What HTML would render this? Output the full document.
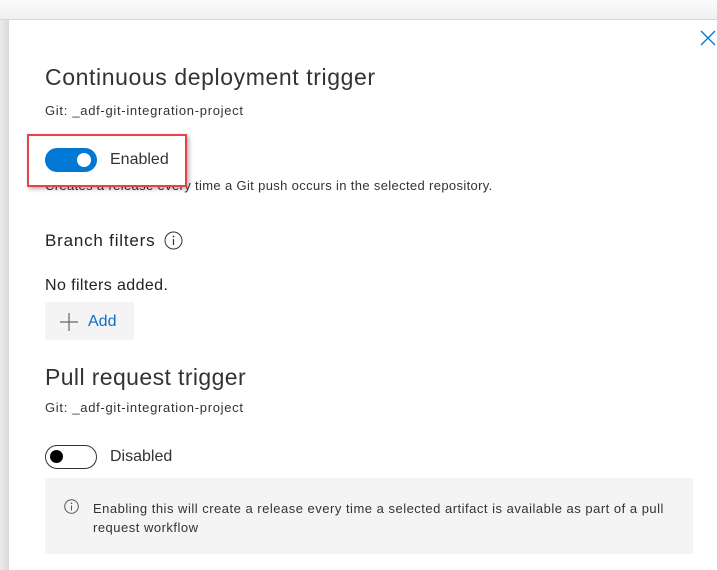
<!DOCTYPE html>
<html><head><style>
body{margin:0;width:717px;height:570px;overflow:hidden;background:#fff;font-family:"Segoe UI","Liberation Sans",sans-serif;color:#333;position:relative}
.a{position:absolute;white-space:nowrap}
</style></head><body>
<div class="a" style="left:0;top:0;width:717px;height:19px;background:linear-gradient(#fbfbfb,#f0f0f0);border-bottom:1px solid #d6d6d6"></div>
<div class="a" style="left:0;top:20px;width:9px;height:550px;background:linear-gradient(90deg,#ececec,#d8d8d8)"></div>
<svg class="a" style="left:700px;top:30px" width="16" height="16"><path d="M1 1L15 15M15 1L1 15" stroke="#0078d4" stroke-width="1.3"/></svg>
<div class="a" style="left:45px;top:64px;font-size:23px;letter-spacing:0.6px;color:#333">Continuous deployment trigger</div>
<div class="a" style="left:45px;top:103px;font-size:13px;letter-spacing:0.7px;color:#333">Git: _adf-git-integration-project</div>
<div class="a" style="left:45px;top:178px;font-size:13px;letter-spacing:0.35px;color:#333">Creates a release every time a Git push occurs in the selected repository.</div>
<div class="a" style="left:27px;top:134px;width:156px;height:49px;border:2px solid #e8414a;box-shadow:2px 2px 4px rgba(0,0,0,.3);background:#fff"></div>
<div class="a" style="left:45px;top:148px;width:52px;height:24px;border-radius:12px;background:#0078d4"></div>
<div class="a" style="left:77px;top:153px;width:14px;height:14px;border-radius:50%;background:#fff"></div>
<div class="a" style="left:110px;top:151px;font-size:16px;color:#333">Enabled</div>
<div class="a" style="left:45px;top:231px;font-size:17px;letter-spacing:0.8px;color:#222">Branch filters</div>
<svg class="a" style="left:164px;top:231px" width="19" height="19"><circle cx="9.5" cy="9.5" r="8.5" fill="none" stroke="#333"/><path d="M9.5 8v6" stroke="#333" stroke-width="1.2"/><circle cx="9.5" cy="5.5" r=".9" fill="#333"/></svg>
<div class="a" style="left:45px;top:277px;font-size:16px;letter-spacing:0.4px;color:#222">No filters added.</div>
<div class="a" style="left:45px;top:302px;width:89px;height:38px;background:#f4f4f4"></div>
<svg class="a" style="left:60px;top:313px" width="18" height="18"><path d="M9 0v18M0 9h18" stroke="#666" stroke-width="1.2"/></svg>
<div class="a" style="left:88px;top:313px;font-size:16px;color:#106ebe">Add</div>
<div class="a" style="left:45px;top:364px;font-size:23px;letter-spacing:0.4px;color:#333">Pull request trigger</div>
<div class="a" style="left:45px;top:400px;font-size:13px;letter-spacing:0.7px;color:#333">Git: _adf-git-integration-project</div>
<div class="a" style="left:45px;top:445px;width:50px;height:22px;border-radius:12px;border:1px solid #333"></div>
<div class="a" style="left:50px;top:450px;width:13px;height:13px;border-radius:50%;background:#000"></div>
<div class="a" style="left:110px;top:448px;font-size:16px;color:#333">Disabled</div>
<div class="a" style="left:45px;top:478px;width:648px;height:76px;background:#f4f4f4"></div>
<svg class="a" style="left:64px;top:499px" width="15" height="15"><circle cx="7.5" cy="7.5" r="6.8" fill="none" stroke="#555"/><path d="M7.5 6.5v5" stroke="#555"/><circle cx="7.5" cy="4.3" r=".8" fill="#555"/></svg>
<div class="a" style="left:93px;top:499px;font-size:13px;line-height:19px;letter-spacing:0.5px;color:#333;white-space:normal;width:580px">Enabling this will create a release every time a selected artifact is available as part of a pull request workflow</div>
</body></html>
